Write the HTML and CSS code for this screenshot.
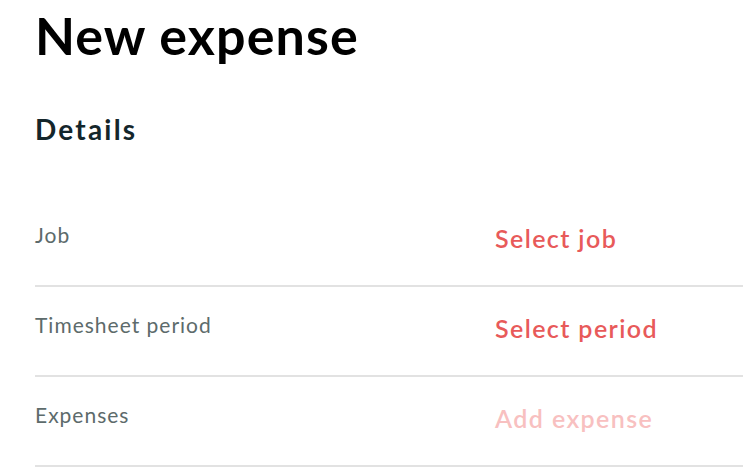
FILE: index.html
```html
<!DOCTYPE html>
<html>
<head>
<meta charset="utf-8">
<link rel="stylesheet" href="styles.css">
</head>
<body>
<main class="page">
  <h1 class="title">New expense</h1>
  <h2 class="section">Details</h2>
  <div class="list">
    <div class="row">
      <span class="label">Job</span>
      <span class="value">Select job</span>
    </div>
    <div class="row">
      <span class="label">Timesheet period</span>
      <span class="value">Select period</span>
    </div>
    <div class="row">
      <span class="label">Expenses</span>
      <span class="value disabled">Add expense</span>
    </div>
  </div>
</main>
</body>
</html>
```
FILE: styles.css
```css
html, body {
  margin: 0;
  padding: 0;
  background: #ffffff;
}
body {
  font-family: Lato, "Noto Sans", sans-serif;
  overflow: hidden;
}
.page {
  padding: 0 0 0 35px;
}
.title {
  margin: 0;
  padding-top: 6px;
  font-size: 52px;
  line-height: 58px;
  font-weight: 700;
  color: #000;
  letter-spacing: 1.1px;
}
.section {
  margin: 0;
  padding-top: 49px;
  font-size: 28px;
  line-height: 32px;
  font-weight: 700;
  color: #14262b;
  letter-spacing: 2.2px;
}
.list {
  margin-top: 52px;
}
.row {
  display: flex;
  align-items: flex-start;
  height: 88px;
  border-bottom: 2px solid #e2e2e2;
}
.label {
  width: 460px;
  flex: none;
  padding-top: 26px;
  font-size: 21px;
  line-height: 24px;
  color: #5d6b6b;
  letter-spacing: 1px;
}
.value {
  padding-top: 27px;
  font-size: 25px;
  line-height: 28px;
  font-weight: 600;
  color: #e85a5a;
  letter-spacing: 1.4px;
}
.value.disabled {
  color: #f8c0c0;
}
```
